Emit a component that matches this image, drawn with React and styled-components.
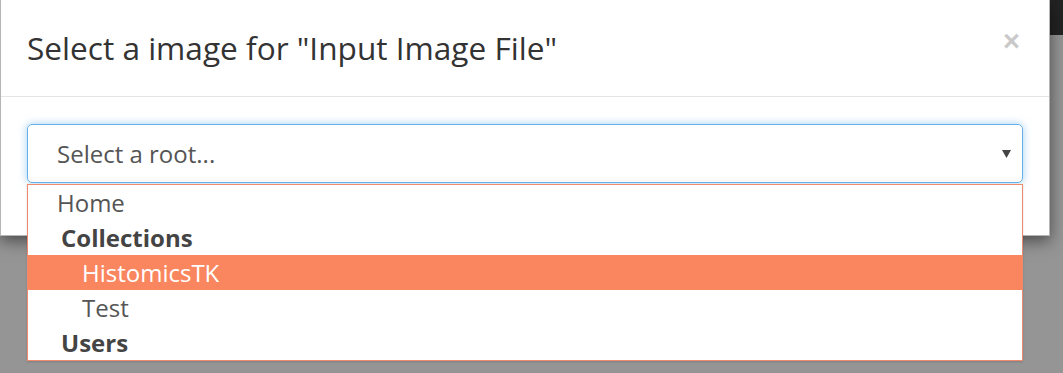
import styled, { createGlobalStyle } from "styled-components";

const GlobalStyle = createGlobalStyle`
  html, body {
    margin: 0;
    padding: 0;
    height: 100%;
  }
  body {
    font-family: "Open Sans", "Liberation Sans", sans-serif;
    background:
      linear-gradient(#232323, #232323) no-repeat right top / 14px 35px,
      #959595;
    overflow: hidden;
  }
`;

const Page = styled.div`
  width: 1063px;
  height: 373px;
`;

const Dialog = styled.div`
  width: 1050px;
  background: #fff;
  border-left: 1px solid #b5b5b5;
  border-right: 1px solid #b5b5b5;
  border-bottom: 1px solid #b5b5b5;
  box-shadow: 0 5px 15px rgba(0, 0, 0, 0.5);
  box-sizing: border-box;
`;

const Header = styled.div`
  height: 97px;
  display: flex;
  align-items: center;
  justify-content: space-between;
  padding: 0 29px 0 26px;
  border-bottom: 1px solid #e5e5e5;
  box-sizing: border-box;
`;

const Title = styled.h4`
  margin: 0;
  font-size: 31.6px;
  font-weight: 400;
  line-height: 1.1;
  color: #333;
`;

const Close = styled.button`
  border: 0;
  background: none;
  padding: 0;
  margin-bottom: 14px;
  font-family: "Liberation Sans", sans-serif;
  font-size: 29px;
  font-weight: 700;
  line-height: 1;
  color: #c9c9c9;
  cursor: pointer;
`;

const Body = styled.div`
  padding: 27px 26px 52px 26px;
`;

const Field = styled.div`
  position: relative;
`;

const SelectBox = styled.div`
  height: 59px;
  display: flex;
  align-items: center;
  justify-content: space-between;
  padding: 0 11px 0 29px;
  border: 1px solid #66afe9;
  border-radius: 5px;
  box-shadow: inset 0 -6px 8px -6px rgba(0, 0, 0, 0.06),
    0 0 8px rgba(102, 175, 233, 0.6);
  box-sizing: border-box;
  font-size: 24px;
  color: #555;
`;

const Caret = styled.svg`
  width: 9px;
  height: 8px;
  fill: #444;
`;

const Menu = styled.ul`
  position: absolute;
  top: 60px;
  left: 0;
  right: 0;
  margin: 0;
  padding: 0;
  list-style: none;
  background: #fff;
  border: 1px solid #f08a6c;
  box-shadow: 0 1px 2px rgba(0, 0, 0, 0.15);
`;

const Item = styled.li`
  height: 35px;
  display: flex;
  align-items: center;
  padding-left: ${(p) => p.$indent}px;
  font-size: 24px;
  font-weight: ${(p) => (p.$group ? 700 : 400)};
  color: ${(p) => (p.$active ? "#fff" : p.$group ? "#444" : "#555")};
  background: ${(p) => (p.$active ? "#fa865f" : "transparent")};
  box-sizing: border-box;
`;

const items = [
  { label: "Home", indent: 29 },
  { label: "Collections", indent: 33, group: true },
  { label: "HistomicsTK", indent: 54, active: true },
  { label: "Test", indent: 54 },
  { label: "Users", indent: 33, group: true },
];

export default function App() {
  return (
    <>
      <GlobalStyle />
      <Page>
        <Dialog>
          <Header>
            <Title>Select a image for "Input Image File"</Title>
            <Close aria-label="Close">×</Close>
          </Header>
          <Body>
            <Field>
              <SelectBox>
                <span>Select a root...</span>
                <Caret viewBox="0 0 9 8">
                  <path d="M0 0h9L4.5 8z" />
                </Caret>
              </SelectBox>
              <Menu>
                {items.map((it) => (
                  <Item
                    key={it.label}
                    $indent={it.indent}
                    $group={it.group}
                    $active={it.active}
                  >
                    {it.label}
                  </Item>
                ))}
              </Menu>
            </Field>
          </Body>
        </Dialog>
      </Page>
    </>
  );
}
